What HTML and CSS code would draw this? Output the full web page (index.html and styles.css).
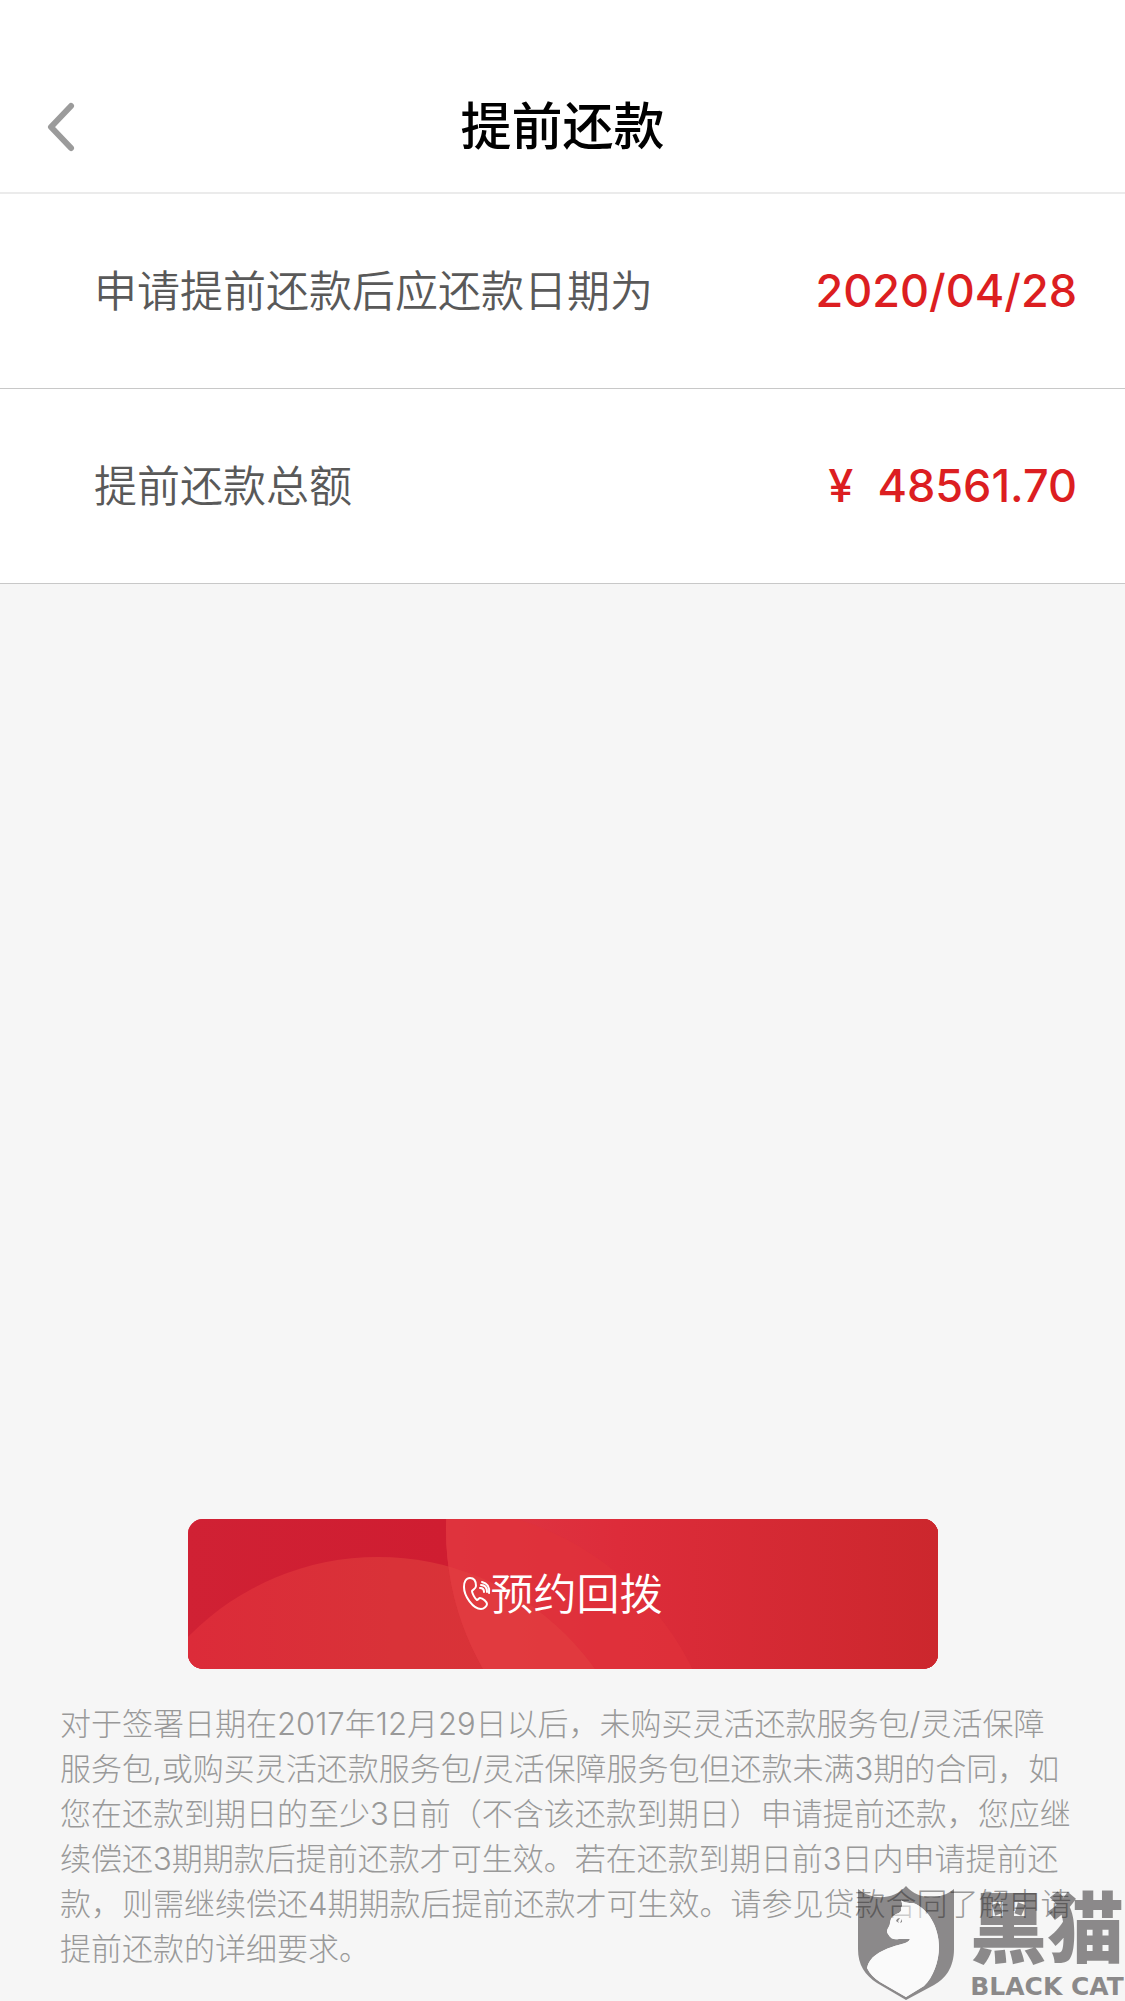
FILE: index.html
```html
<!DOCTYPE html>
<html lang="zh-CN">
<head>
<meta charset="utf-8">
<meta name="viewport" content="width=device-width, initial-scale=1">
<title>提前还款</title>
<link rel="stylesheet" href="styles.css">
</head>
<body>
<div class="page">
  <header class="header">
    <button class="back" type="button" aria-label="返回">
      <svg width="32" height="52" viewBox="0 0 32 52" fill="none" stroke="#9b9b9b" stroke-width="6" stroke-linecap="round" stroke-linejoin="round"><path d="M26 5 6 26 26 47"/></svg>
    </button>
    <h1 class="title">提前还款</h1>
  </header>
  <dl class="details">
    <div class="row">
      <dt class="label">申请提前还款后应还款日期为</dt>
      <dd class="value">2020/04/28</dd>
    </div>
    <div class="row">
      <dt class="label">提前还款总额</dt>
      <dd class="value"><span>¥</span><span>48561.70</span></dd>
    </div>
  </dl>
  <main class="bottom">
    <button class="call" type="button">
      <svg class="call-bg" viewBox="0 0 750 150" preserveAspectRatio="none" aria-hidden="true">
        <defs>
          <linearGradient id="base" x1="0" x2="1" y1="0" y2="0">
            <stop offset="0" stop-color="#d02134"/><stop offset=".34" stop-color="#cf1d31"/><stop offset=".6" stop-color="#dc2c3b"/><stop offset="1" stop-color="#cc272d"/>
          </linearGradient>
          <linearGradient id="hill" gradientUnits="userSpaceOnUse" x1="0" x2="410" y1="0" y2="0">
            <stop offset="0" stop-color="#dc2b39"/><stop offset=".5" stop-color="#d93238"/><stop offset="1" stop-color="#d83338"/>
          </linearGradient>
          <linearGradient id="moon" gradientUnits="userSpaceOnUse" x1="258" x2="750" y1="0" y2="0">
            <stop offset="0" stop-color="#de3744"/><stop offset=".35" stop-color="#dd2c3a"/><stop offset="1" stop-color="#cc272d"/>
          </linearGradient>
          <clipPath id="inMoon"><circle cx="537" cy="11" r="279"/></clipPath>
        </defs>
        <rect width="750" height="150" fill="url(#base)"/>
        <circle cx="190" cy="304" r="266" fill="url(#hill)"/>
        <rect x="537" width="213" height="150" fill="url(#moon)"/>
        <circle cx="537" cy="11" r="279" fill="url(#moon)"/>
        <g clip-path="url(#inMoon)">
          <circle cx="243" cy="278" r="291" fill="#df323a" fill-opacity=".7"/>
          <circle cx="190" cy="304" r="266" fill="#e13c40" fill-opacity=".8"/>
        </g>
      </svg>
      <svg class="phone" width="28" height="36" viewBox="0 0 28 36" fill="none" stroke="#fff" stroke-width="2" stroke-linecap="round" stroke-linejoin="round" aria-hidden="true">
        <path d="M7 2C3 2 1 6 1 11c0 9 9 22 17 22 3 0 6-3 6-5 0-2-4-6-7-6-1 0-2 2-3 2-2-1-5-7-5-9 0-1 4-2 4-5 0-4-1-8-6-8z"/>
        <path d="M17 12c3 0 4 2 4 4M18 9c4 0 6 3 6 7M19 6c5 1 8 5 7 11"/>
      </svg>
      <span class="call-text">预约回拨</span>
    </button>
    <p class="note">对于签署日期在2017年12月29日以后，未购买灵活还款服务包/灵活保障服务包,或购买灵活还款服务包/灵活保障服务包但还款未满3期的合同，如您在还款到期日的至少3日前（不含该还款到期日）申请提前还款，您应继续偿还3期期款后提前还款才可生效。若在还款到期日前3日内申请提前还款，则需继续偿还4期期款后提前还款才可生效。请参见贷款合同了解申请提前还款的详细要求。</p>
  </main>
  <div class="watermark">
    <svg width="98" height="116" viewBox="0 0 98 116" aria-hidden="true">
      <path fill="#231f20" fill-rule="evenodd" d="M1 4C14 15 36 16 49 1 62 16 84 15 97 4V64C97 83 88 94 77 100L49 115 20 98C8 90 1 80 1 64ZM44 15C45 18 46 20 44 23 45 26 43 27 42 28 36 30 34 32 33 38 33 42 28 45 31 49 34 54 37 55 42 54H53C51 59 42 59 35 62 23 66 12 72 10 83 13 89 17 93 23 97L49 112 67 101C76 93 82 76 82 62 82 42 71 23 56 18 51 18 47 18 44 15Z"/>
      <path fill="#fff" d="M44 15C45 18 46 20 44 23 45 26 43 27 42 28 36 30 34 32 33 38 33 42 28 45 31 49 34 54 37 55 42 54H53C51 59 42 59 35 62 23 66 12 72 10 83 13 89 17 93 23 97L49 112 67 101C76 93 82 76 82 62 82 42 71 23 56 18 51 18 47 18 44 15Z"/>
      <path fill="#231f20" d="M39 36Q40 33 43 33L41 36 42 38ZM43 38 45 34V37Z"/>
    </svg>
    <div class="brand"><span class="brand-cn">黑猫</span><span class="brand-en">BLACK CAT</span></div>
  </div>
</div>
</body>
</html>
```
FILE: styles.css
```css
* { box-sizing: border-box; }
body {
  margin: 0;
  background: #f6f6f6;
  font-family: Inter, "Noto Sans CJK SC", sans-serif;
}
button { border: 0; padding: 0; font: inherit; cursor: pointer; }
.page {
  position: relative;
  min-height: 100vh;
  display: flex;
  flex-direction: column;
  overflow: hidden;
}
.header {
  display: grid;
  grid-template-columns: 96px 1fr 96px;
  align-items: center;
  height: 194px;
  padding-top: 61px;
  border-bottom: 2px solid #ebebeb;
  background: #fff;
}
.back { display: flex; padding-left: 45px; background: none; }
.title {
  margin: 0;
  text-align: center;
  font-size: 51px;
  line-height: 64px;
  font-weight: 500;
  color: #000;
}
.details { margin: 0; background: #fff; }
.row {
  display: flex;
  justify-content: space-between;
  align-items: center;
  height: 195px;
  padding: 0 48px 0 94px;
  border-bottom: 1px solid #c8c8c8;
}
.label { font-size: 43px; line-height: 60px; font-weight: 350; color: #595959; }
.value {
  display: flex;
  gap: 24px;
  margin: 0;
  font-size: 45px;
  line-height: 60px;
  font-weight: 500;
  color: #dc1e21;
}
.bottom {
  margin-top: auto;
  display: flex;
  flex-direction: column;
  align-items: center;
  padding-bottom: 30px;
}
.call {
  position: relative;
  display: flex;
  align-items: center;
  justify-content: center;
  width: calc(100% * 2 / 3);
  height: 150px;
  border-radius: 15px;
  overflow: hidden;
  color: #fff;
  background: #d62a37;
}
.call-bg { position: absolute; inset: 0; width: 100%; height: 100%; }
.phone, .call-text { position: relative; }
.call-text { font-size: 43px; line-height: 60px; font-weight: 350; }
.note {
  margin: 32px 0 0;
  width: 100%;
  padding: 0 50px 0 60px;
  font-size: 31px;
  line-height: 45px;
  font-weight: 300;
  color: #999;
}
.watermark {
  position: absolute;
  right: 1px;
  bottom: 0;
  display: flex;
  gap: 15px;
  opacity: .5;
  color: #231f20;
}
.brand { display: flex; flex-direction: column; align-items: center; }
.brand-cn { font-size: 77px; line-height: 88px; font-weight: 900; }
.brand-en { font: 700 25px/28px "DejaVu Sans", sans-serif; }
```
